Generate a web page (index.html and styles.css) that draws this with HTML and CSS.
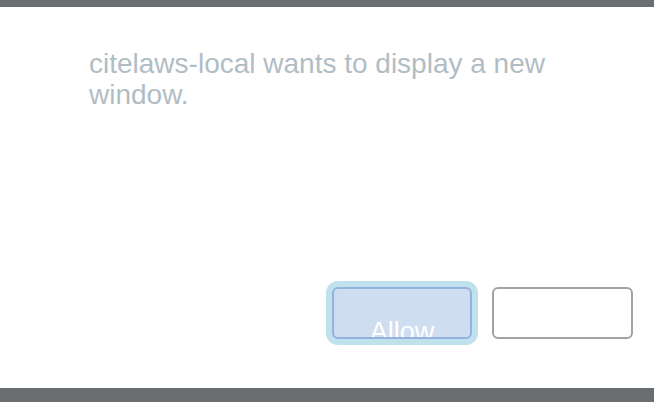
FILE: index.html
```html
<!DOCTYPE html>
<html lang="en">
<head>
<meta charset="utf-8">
<title>Permission</title>
<link rel="stylesheet" href="styles.css">
</head>
<body>
<div class="page">
  <div class="bar bar-top"></div>
  <main class="dialog">
    <p class="message">citelaws-local wants to display a new window.</p>
    <div class="actions">
      <button class="btn btn-allow" type="button"><span class="btn-label">Allow</span></button>
      <button class="btn btn-deny" type="button"></button>
    </div>
  </main>
  <div class="bar bar-bottom"></div>
</div>
</body>
</html>
```
FILE: styles.css
```css
html, body {
  margin: 0;
  padding: 0;
  height: 100%;
  background: #ffffff;
}
.page {
  display: flex;
  flex-direction: column;
  height: 402px;
  width: 654px;
  font-family: "Liberation Sans", Arial, sans-serif;
}
.bar {
  background: #6b6e70;
  flex: none;
}
.bar-top { height: 7px; }
.bar-bottom { height: 14px; }
.dialog {
  flex: 1;
  display: flex;
  flex-direction: column;
  padding: 41px 21px 49px 89px;
  background: #ffffff;
}
.message {
  margin: 0;
  max-width: 500px;
  font-size: 28px;
  line-height: 31px;
  color: #b1bdc5;
}
.actions {
  margin-top: auto;
  display: flex;
  justify-content: flex-end;
  gap: 20px;
}
.btn {
  box-sizing: border-box;
  height: 52px;
  border-radius: 6px;
  padding: 0;
  margin: 0;
  font-family: inherit;
  overflow: hidden;
}
.btn-allow {
  width: 140px;
  background: #cfddf0;
  border: 2px solid #95b2df;
  box-shadow: 0 0 0 6px #bfe2ec;
  display: flex;
  justify-content: center;
  align-items: flex-start;
  padding-top: 28px;
}
.btn-label {
  color: #ffffff;
  font-size: 27px;
  line-height: 31px;
}
.btn-deny {
  width: 141px;
  background: #ffffff;
  border: 2px solid #a2a2a2;
}
```
